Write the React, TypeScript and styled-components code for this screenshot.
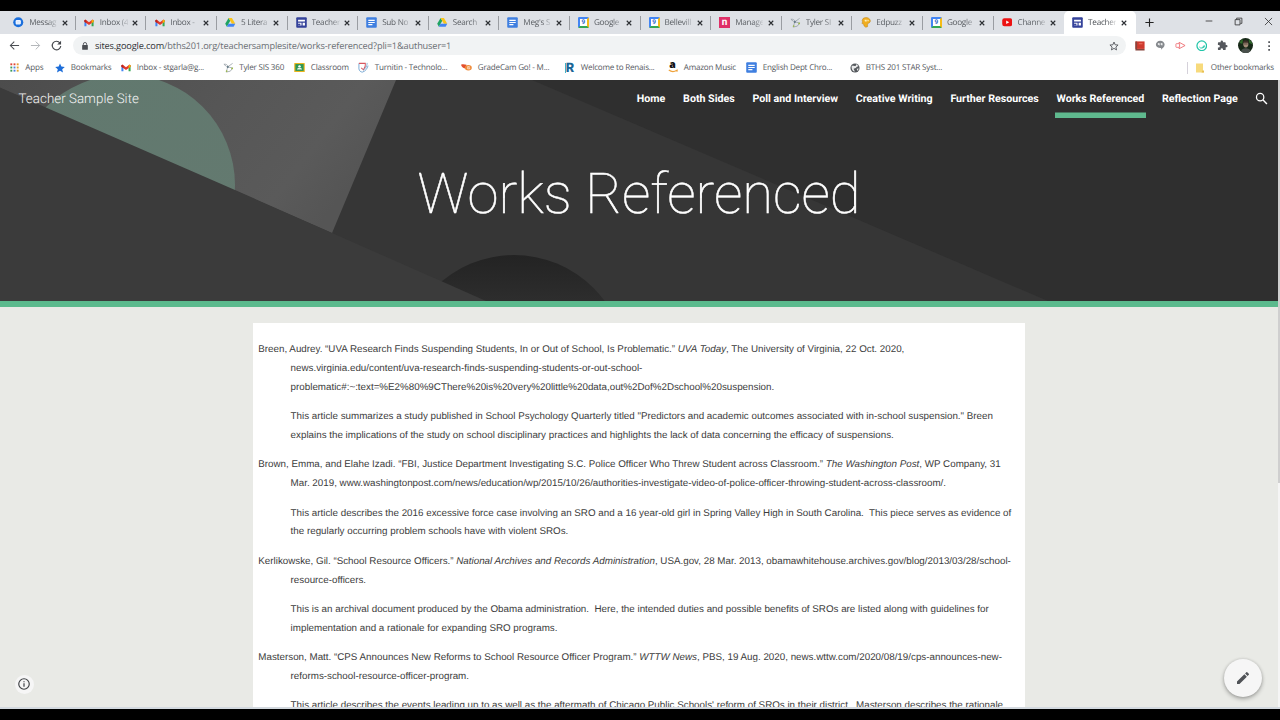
import React, { Fragment, type ReactNode } from "react";
import styled, { createGlobalStyle, css } from "styled-components";

const GlobalStyle = createGlobalStyle`
  * { box-sizing: border-box; }
  body { margin: 0; background: #000; overflow: hidden; }
  svg { display: block; }
`;

const chromeFont = `"Open Sans", "Noto Sans", sans-serif`;

const Screen = styled.div`
  width: 1280px;
  height: 720px;
  padding: 11px 0;
  background: #000;
  display: flex;
  flex-direction: column;
  overflow: hidden;
`;

const Browser = styled.div`
  height: 698px;
  display: flex;
  flex-direction: column;
  background: #fff;
  font-family: ${chromeFont};
  text-rendering: geometricPrecision;
`;

/* Tab strip */
const TabStrip = styled.div`
  flex: none;
  height: 23px;
  padding-left: 5.2px;
  background: #dee1e6;
  display: flex;
`;

const Tab = styled.div<{ $active?: boolean; $divider?: boolean }>`
  position: relative;
  flex: none;
  width: ${(p) => (p.$active ? 71.5 : 70.6)}px;
  height: 23px;
  padding: 0 4.5px 0 8px;
  display: flex;
  align-items: center;
  color: ${(p) => (p.$active ? "#4b4f54" : "#5a5e63")};
  ${(p) =>
    p.$active &&
    css`
      background: #fff;
      border-radius: 5px 5px 0 0;
    `}
  ${(p) =>
    p.$divider &&
    css`
      &::after {
        content: "";
        position: absolute;
        right: 0;
        top: 5px;
        width: 1px;
        height: 14px;
        background: #9a9da2;
      }
    `}
`;

const TabIcon = styled.span`
  width: 11px;
  flex: none;
  display: flex;
  justify-content: center;
`;

const TabTitle = styled.span`
  width: 28px;
  margin: 0 4.5px 0 5px;
  white-space: pre;
  font-size: 8.2px;
  line-height: 12px;
  letter-spacing: -0.28px;
  mask-image: linear-gradient(to right, #000 66%, rgba(0, 0, 0, 0.15) 100%);
`;

const NewTab = styled.div`
  width: 30px;
  padding-left: 9.5px;
  display: flex;
  align-items: center;
`;

const WindowButtons = styled.div`
  margin-left: auto;
  padding-right: 7px;
  display: flex;
  gap: 21px;
  height: 20px;
  align-items: center;
`;

/* Toolbar */
const Toolbar = styled.div`
  flex: none;
  height: 22px;
  padding: 1px 5px 0 9px;
  display: flex;
  align-items: center;
`;

const NavButtons = styled.div`
  width: 64px;
  display: flex;
  gap: 10px;
`;

const AddressBar = styled.div`
  width: 1053px;
  height: 19px;
  border-radius: 10px;
  background: #f1f3f4;
  display: flex;
  align-items: center;
  padding: 0 7px 0 8px;
  color: #6a6e73;
  font-size: 9.2px;
  line-height: 14px;
  letter-spacing: -0.14px;
`;

const Url = styled.span`
  margin-left: 6px;
  flex: 1;
  white-space: nowrap;
`;

const Host = styled.span`
  color: #2f3135;
`;

const Extensions = styled.div`
  flex: 1;
  padding-left: 9px;
  display: flex;
  align-items: center;
  justify-content: space-between;
`;

/* Bookmarks */
const BookmarkBar = styled.div`
  flex: none;
  height: 24px;
  padding: 0 6px 1px 8px;
  display: flex;
  align-items: center;
  color: #55595e;
  font-size: 8.1px;
  line-height: 12px;
  letter-spacing: -0.22px;
`;

const Bookmark = styled.div<{ $width?: number }>`
  flex: none;
  ${(p) => p.$width && `width: ${p.$width}px;`}
  display: flex;
  align-items: center;
  white-space: nowrap;
`;

const BookmarkIcon = styled.span`
  width: 12px;
  margin-right: 5.3px;
  display: flex;
  justify-content: center;
`;

const OtherBookmarks = styled.div`
  margin-left: auto;
  padding-left: 6px;
  border-left: 1px solid #d5d1da;
  display: flex;
`;

/* Page */
const Viewport = styled.div`
  flex: 1;
  min-height: 0;
  display: flex;
`;

const Page = styled.main`
  position: relative;
  width: 1278px;
  background: #e9eae6;
  overflow: hidden;
`;

const ScrollTrack = styled.div`
  width: 2px;
  background: #f5f5f5;
`;

const ScrollThumb = styled.div`
  height: 403px;
  background: #cfcfcf;
`;

const Banner = styled.header`
  position: relative;
  height: 227px;
  border-bottom: 6.5px solid #5bba8d;
  background: #383838;
  color: #fff;
  font-family: Roboto, sans-serif;
  overflow: hidden;
`;

const BannerArt = styled.svg`
  position: absolute;
  inset: 0;
`;

const SiteHeader = styled.div`
  position: relative;
  height: 37.5px;
  padding: 0 10px 0 18.5px;
  display: flex;
  align-items: center;
`;

const SiteName = styled.span`
  flex: 1;
  padding-top: 1.5px;
  font-size: 13.33px;
  font-weight: 300;
  letter-spacing: 0.04px;
  color: #f4f4f4;
`;

const SiteNav = styled.nav`
  display: flex;
  margin-right: 15.5px;
  gap: 14.35px;
`;

const NavLink = styled.a<{ $current?: boolean }>`
  height: 37.5px;
  padding: 0 1.7px 0.5px;
  display: flex;
  align-items: center;
  font-size: 10.67px;
  font-weight: 700;
  white-space: nowrap;
  box-shadow: ${(p) => (p.$current ? "inset 0 -5.5px #5fb98e" : "none")};
`;

const PageTitle = styled.h1`
  position: relative;
  margin: 42px 0 0;
  text-align: center;
  font-size: 56.2px;
  line-height: 68px;
  font-weight: 100;
  -webkit-text-stroke: 0.5px #fff;
`;

const Card = styled.article`
  width: 772px;
  margin: 16px 0 0 253px;
  padding: 18px 5px 0 5.3px;
  height: 500px;
  background: #fff;
  color: #3c3c3c;
  font-family: "Liberation Sans", Arial, sans-serif;
  font-size: 9.805px;
  line-height: 18.85px;
`;

const Citation = styled.p`
  margin: 0 0 10.55px;
  padding-left: 32.3px;
  text-indent: -32.3px;
  white-space: pre;
`;

const HangingLines = styled.span`
  display: block;
  text-indent: 0;
`;

const Annotation = styled.p`
  margin: 0 0 10.55px;
  padding-left: 32.3px;
  white-space: pre;
`;

const RoundButton = styled.button<{ $small?: boolean }>`
  position: absolute;
  padding: 0;
  border: 0;
  border-radius: 50%;
  background: #f6f6f6;
  display: flex;
  align-items: center;
  justify-content: center;
  ${(p) =>
    p.$small
      ? css`
          left: 14.5px;
          top: 594.5px;
          width: 19px;
          height: 19px;
        `
      : css`
          left: 1224px;
          top: 578.5px;
          width: 38px;
          height: 38px;
          box-shadow: 0 2px 4px rgba(0, 0, 0, 0.3), 0 0 3px rgba(0, 0, 0, 0.12);
        `}
`;

const BottomEdge = styled.div`
  flex: none;
  height: 2px;
  background: #d3d9df;
`;

/* Icons */
const Svg = ({ s = 10, box = 24, children }: { s?: number; box?: number; children: ReactNode }) => (
  <svg width={s} height={s} viewBox={`0 0 ${box} ${box}`} fill="none">
    {children}
  </svg>
);

const Gmail = () => (
  <Svg s={10}>
    <path d="M1 5v14.500h4.800V10z" fill="#4285f4" />
    <path d="M23 5v14.500h-4.800V10z" fill="#34a853" />
    <path d="M1 5.500 3.500 3.500 12 10l8.500-6.500L23 5.500V9l-11 8L1 9z" fill="#e0392d" />
    <path d="M18.200 6 21 4l2 1.500V9l-4.800 3.500z" fill="#f6b704" />
    <path d="M1 9l4.800 3.500V6L3 4 1 5.500z" fill="#b9251d" />
  </Svg>
);
const Messages = () => (
  <Svg s={10.5}>
    <circle cx="12" cy="12" r="11.500" fill="#1b6fdc" />
    <path d="M8.500 7h7A2.500 2.500 0 0 1 18 9.500v5a2.500 2.500 0 0 1-2.500 2.500H7l-1-2V9.500A2.500 2.500 0 0 1 8.500 7z" fill="#eef4ff" />
    <path d="M9 10.500h6M9 13.500h6" stroke="#bcd5f6" strokeWidth="1" />
  </Svg>
);
const Drive = () => (
  <Svg s={10.5}>
    <path d="M8.200 2 0.500 15.500 4.300 22 12 8.500z" fill="#1ea362" />
    <path d="M8.200 2h7.600l7.700 13.500h-7.700z" fill="#fbc417" />
    <path d="M4.300 22h15.400l3.800-6.500H8z" fill="#4285f4" />
  </Svg>
);
const SitesIcon = () => (
  <Svg s={11}>
    <rect x="0.500" y="0.500" width="23" height="23" rx="2" fill="#34429a" />
    <path d="M4.500 6h15v4h-15zM4.500 12.500h7.500v6H4.500zM14.500 12.500h5v6h-5z" fill="#fff" />
    <path d="M4.500 14.500h5v4h-5z" fill="#34429a" />
  </Svg>
);
const Docs = () => (
  <Svg s={11}>
    <rect x="0.500" y="0.500" width="23" height="23" rx="2" fill="#3f7fe0" />
    <path d="M5 6h14v2.500H5zM5 10.700h14v2.500H5zM5 15.500h9V18H5z" fill="#fff" />
  </Svg>
);
const CalendarDay = styled.span`
  width: 11px;
  height: 11px;
  flex: none;
  display: flex;
  align-items: center;
  justify-content: center;
  background: #fff;
  border: 2px solid;
  border-color: #4285f4 #f6bb16 #34a853 #4285f4;
  border-radius: 1.5px;
  color: #2f68c8;
  font: 700 6.5px/7px Roboto, sans-serif;
`;
const Calendar = () => <CalendarDay>9</CalendarDay>;
const LetterTile = styled.span`
  width: 11px;
  height: 11px;
  flex: none;
  display: flex;
  align-items: center;
  justify-content: center;
  background: #df3068;
  color: #fff;
  font: 700 10px/9px Roboto, sans-serif;
`;
const Nearpod = () => <LetterTile>n</LetterTile>;
const Tyler = () => (
  <Svg s={11}>
    <path d="M2 5c4-1 8 1 9 5M11 10l10-7M12 11l9 2M10 12l-3 10M7 22l9-2M16 20l5-7M2 5l6 5" stroke="#8a959c" strokeWidth="1.500" />
    <circle cx="10.500" cy="11" r="2.300" fill="#5c7380" />
    <circle cx="20" cy="14" r="2" fill="#9bb946" />
    <circle cx="8" cy="20" r="1.800" fill="#9bb946" />
  </Svg>
);
const Edpuzzle = () => (
  <Svg s={10.5}>
    <path d="M5 3c5-3 12-2 15 2 3 4 1 8-3 9l-2 2v6l-4 1.500-4-3-1-4-4-2 1.500-3-1-4z" fill="#f0ae20" stroke="#b67a12" strokeWidth="1" />
    <path d="M8 6h5v4H9zM14 6l4 1-2 4z" fill="#fff0be" />
  </Svg>
);
const Youtube = () => (
  <Svg s={10.5}>
    <rect x="0.500" y="3" width="23" height="18" rx="5" fill="#ec1212" />
    <path d="m9.500 8 7 4-7 4z" fill="#fff" />
  </Svg>
);
const CloseX = () => (
  <Svg s={6} box={12}>
    <path d="m1.500 1.500 9 9M10.500 1.500l-9 9" stroke="#2c2f33" strokeWidth="2.200" />
  </Svg>
);
const AppsGrid = () => (
  <Svg s={9}>
    {["#de4437", "#de4437", "#e99a2b", "#3b9b57", "#4a7fe0", "#e0a52f", "#3b9b57", "#4a7fe0", "#e0a52f"].map((c, i) => (
      <rect key={i} x={1 + (i % 3) * 8.5} y={1 + Math.floor(i / 3) * 8.5} width="5" height="5" fill={c} />
    ))}
  </Svg>
);
const BlueStar = () => (
  <Svg s={10}>
    <path d="m12 1 3.300 7.600 8.200.7-6.200 5.400 1.900 8L12 18.400l-7.200 4.300 1.900-8L.5 9.300l8.200-.7z" fill="#1c6dd9" />
  </Svg>
);
const Classroom = () => (
  <Svg s={11}>
    <rect x="0.500" y="2" width="23" height="20" rx="1" fill="#e9b51e" />
    <rect x="3" y="4.500" width="18" height="15" fill="#2d9657" />
    <circle cx="12" cy="9.500" r="2.600" fill="#fff" />
    <path d="M6.500 16.500c0-3 2.500-4 5.500-4s5.500 1 5.500 4z" fill="#e7f4ea" />
  </Svg>
);
const Turnitin = () => (
  <Svg s={11}>
    <path d="M2 3v12c1 5 4 7 8 7 6-2 10-7 12-14" stroke="#5a97cb" strokeWidth="1.700" />
    <path d="M2 3h14c1 5-1 10-4 14l-5-4" stroke="#d85860" strokeWidth="2.200" />
    <path d="M20 2c0 7-3 12-9 16" stroke="#5a97cb" strokeWidth="1.500" />
  </Svg>
);
const GradeCam = () => (
  <Svg s={11}>
    <path d="M0 6c5-2 9 0 12 0l-2 8C6 14 1 11 0 6z" fill="#e34f2d" />
    <ellipse cx="16" cy="12.500" rx="7.500" ry="6" fill="#ef8b39" />
    <path d="M19 10h-4.500v5H19v-2.500h-3" stroke="#fff" strokeWidth="1.300" />
  </Svg>
);
const RenaissanceMark = styled.span`
  color: #1b6697;
  font: 900 13px/13px Roboto, sans-serif;
  border-left: 1.5px solid #41b3c9;
  height: 10px;
  padding-top: 1px;
  display: flex;
  align-items: center;
`;
const AmazonMark = styled.span`
  display: flex;
  flex-direction: column;
  align-items: center;
  color: #111;
  font: 800 10.5px/7px "Open Sans", sans-serif;
`;
const Amazon = () => (
  <AmazonMark>
    a
    <svg width="10" height="4" viewBox="0 0 10 4" fill="none">
      <path d="M.8 1c2.500 2 5.500 2 8 .3M9.300.5 9 2.700" stroke="#efa23a" strokeWidth="1.100" />
    </svg>
  </AmazonMark>
);
const Globe = () => (
  <Svg s={10}>
    <circle cx="12" cy="12" r="11" fill="#55595d" />
    <path d="M4 7c4-1 6 1 9 0s0-4 3-4l4 4c-2 2-4 1-5 4s-5 1-6 3 3 3 2 7c-5-2-8-7-7-14zM16 14l5-1-3 6z" fill="#e8e9ea" />
  </Svg>
);
const Folder = () => (
  <svg width="8" height="10" viewBox="0 0 8 10">
    <path d="M0 .5h7v7.500l1 1.500H0z" fill="#f7da7c" />
    <path d="M6.500 7.500h1.500v2H5.500z" fill="#e8be52" />
  </svg>
);

const tabs: { title: string; icon: ReactNode }[] = [
  { title: "Messag", icon: <Messages /> },
  { title: "Inbox (4", icon: <Gmail /> },
  { title: "Inbox -", icon: <Gmail /> },
  { title: "5 Litera", icon: <Drive /> },
  { title: "Teacher", icon: <SitesIcon /> },
  { title: "Sub No", icon: <Docs /> },
  { title: "Search", icon: <Drive /> },
  { title: "Meg's S", icon: <Docs /> },
  { title: "Google", icon: <Calendar /> },
  { title: "Bellevill", icon: <Calendar /> },
  { title: "Manage", icon: <Nearpod /> },
  { title: "Tyler SI", icon: <Tyler /> },
  { title: "Edpuzz", icon: <Edpuzzle /> },
  { title: "Google", icon: <Calendar /> },
  { title: "Channe", icon: <Youtube /> },
  { title: "Teacher", icon: <SitesIcon /> },
];

const bookmarks: { label: string; width: number; icon: ReactNode }[] = [
  { label: "Apps", width: 45.5, icon: <AppsGrid /> },
  { label: "Bookmarks", width: 66, icon: <BlueStar /> },
  { label: "Inbox - stgarla@g...", width: 102.5, icon: <Gmail /> },
  { label: "Tyler SIS 360", width: 71.5, icon: <Tyler /> },
  { label: "Classroom", width: 64, icon: <Classroom /> },
  { label: "Turnitin - Technolo...", width: 103, icon: <Turnitin /> },
  { label: "GradeCam Go! - M...", width: 103, icon: <GradeCam /> },
  { label: "Welcome to Renais...", width: 103, icon: <RenaissanceMark>R</RenaissanceMark> },
  { label: "Amazon Music", width: 79, icon: <Amazon /> },
  { label: "English Dept Chro...", width: 103, icon: <Docs /> },
  { label: "BTHS 201 STAR Syst...", width: 103, icon: <Globe /> },
];

const pages = ["Home", "Both Sides", "Poll and Interview", "Creative Writing", "Further Resources", "Works Referenced", "Reflection Page"];

const references: { lead: ReactNode; rest: string; note: string }[] = [
  {
    lead: (
      <>
        Breen, Audrey. “UVA Research Finds Suspending Students, In or Out of School, Is Problematic.” <i>UVA Today</i>, The University of Virginia, 22 Oct. 2020,
      </>
    ),
    rest: "news.virginia.edu/content/uva-research-finds-suspending-students-or-out-school-\nproblematic#:~:text=%E2%80%9CThere%20is%20very%20little%20data,out%2Dof%2Dschool%20suspension.",
    note: 'This article summarizes a study published in School Psychology Quarterly titled "Predictors and academic outcomes associated with in-school suspension." Breen\nexplains the implications of the study on school disciplinary practices and highlights the lack of data concerning the efficacy of suspensions.',
  },
  {
    lead: (
      <>
        Brown, Emma, and Elahe Izadi. “FBI, Justice Department Investigating S.C. Police Officer Who Threw Student across Classroom.” <i>The Washington Post</i>, WP Company, 31
      </>
    ),
    rest: "Mar. 2019, www.washingtonpost.com/news/education/wp/2015/10/26/authorities-investigate-video-of-police-officer-throwing-student-across-classroom/.",
    note: "This article describes the 2016 excessive force case involving an SRO and a 16 year-old girl in Spring Valley High in South Carolina.  This piece serves as evidence of\nthe regularly occurring problem schools have with violent SROs.",
  },
  {
    lead: (
      <>
        Kerlikowske, Gil. “School Resource Officers.” <i>National Archives and Records Administration</i>, USA.gov, 28 Mar. 2013, obamawhitehouse.archives.gov/blog/2013/03/28/school-
      </>
    ),
    rest: "resource-officers.",
    note: "This is an archival document produced by the Obama administration.  Here, the intended duties and possible benefits of SROs are listed along with guidelines for\nimplementation and a rationale for expanding SRO programs.",
  },
  {
    lead: (
      <>
        Masterson, Matt. “CPS Announces New Reforms to School Resource Officer Program.” <i>WTTW News</i>, PBS, 19 Aug. 2020, news.wttw.com/2020/08/19/cps-announces-new-
      </>
    ),
    rest: "reforms-school-resource-officer-program.",
    note: "This article describes the events leading up to as well as the aftermath of Chicago Public Schools' reform of SROs in their district.  Masterson describes the rationale",
  },
];

export default function App() {
  return (
    <Screen>
      <GlobalStyle />
      <Browser>
        <TabStrip>
          {tabs.map((t, i) => (
            <Tab key={i} $active={i === tabs.length - 1} $divider={i < tabs.length - 2}>
              <TabIcon>{t.icon}</TabIcon>
              <TabTitle>{t.title}</TabTitle>
              <CloseX />
            </Tab>
          ))}
          <NewTab>
            <Svg s={9}>
              <path d="M12 1v22M1 12h22" stroke="#222" strokeWidth="3" />
            </Svg>
          </NewTab>
          <WindowButtons>
            <Svg s={8}>
              <path d="M2 12h20" stroke="#333" strokeWidth="2.500" />
            </Svg>
            <Svg s={9}>
              <path d="M3 7h13v14H3zM7 7V3h14v14h-4" stroke="#333" strokeWidth="2.200" />
            </Svg>
            <Svg s={9}>
              <path d="m2.500 2.500 19 19M21.500 2.500l-19 19" stroke="#333" strokeWidth="2.200" />
            </Svg>
          </WindowButtons>
        </TabStrip>

        <Toolbar>
          <NavButtons>
            <Svg s={11}>
              <path d="M22 12H3M11.500 3.500 3 12l8.500 8.500" stroke="#4a4d52" strokeWidth="2.300" />
            </Svg>
            <Svg s={11}>
              <path d="M2 12h19M12.500 3.500 21 12l-8.500 8.500" stroke="#aeb1b5" strokeWidth="2" />
            </Svg>
            <Svg s={11}>
              <path d="M19.500 6.500A9.300 9.300 0 1 0 21.300 13" stroke="#44474c" strokeWidth="2.500" />
              <path d="M22 1.500V10h-8.500z" fill="#44474c" />
            </Svg>
          </NavButtons>
          <AddressBar>
            <Svg s={8}>
              <path d="M7 10V6.500a5 5 0 0 1 10 0V10" stroke="#4a4d52" strokeWidth="2.600" />
              <rect x="3.500" y="9" width="17" height="14" rx="1.500" fill="#4a4d52" />
            </Svg>
            <Url>
              <Host>sites.google.com</Host>/bths201.org/teachersamplesite/works-referenced?pli=1&amp;authuser=1
            </Url>
            <Svg s={10}>
              <path d="m12 2.500 2.800 6.600 7 .6-5.300 4.700 1.600 7L12 17.700l-6.100 3.700 1.600-7-5.300-4.700 7-.6z" stroke="#55585d" strokeWidth="2.200" />
            </Svg>
          </AddressBar>
          <Extensions>
            <Svg s={10}>
              <path d="M1 1h22v18H1z" fill="#cf3a2e" />
              <path d="M1 1h4v22H1zM5 19h18v4H5z" fill="#87453d" />
              <path d="M9 5h9v3H9z" fill="#e56a59" />
            </Svg>
            <Svg s={10.5}>
              <path d="M12 1.500c6 0 10 4 10 9 0 6-5 8-8 12v-4C7 19 2 16 2 10.500c0-5 4-9 10-9z" fill="#85898d" />
              <path d="M6.500 7.500h4v4l-1.500 2v-2.500H6.500zM13 7.500h4v4l-1.500 2v-2.500H13z" fill="#fff" />
            </Svg>
            <Svg s={11}>
              <path d="m9 5 13 7-13 7z" stroke="#ee6f73" strokeWidth="2" />
              <rect x="2" y="8" width="8" height="8" rx="1" fill="#fff" stroke="#ee6f73" strokeWidth="1.800" />
            </Svg>
            <Svg s={11.5}>
              <circle cx="12" cy="12" r="10" stroke="#21c5a8" strokeWidth="2.600" />
              <path d="M17 12a5.500 5.500 0 0 1-10 2.500M13 15h4v-4" stroke="#21c5a8" strokeWidth="2" />
            </Svg>
            <Svg s={11}>
              <path d="M20.500 11H19V7c0-1.100-.9-2-2-2h-4V3.500a2.500 2.500 0 0 0-5 0V5H4c-1.100 0-2 .9-2 2v3.800h1.500a2.700 2.700 0 0 1 0 5.400H2V20c0 1.100.9 2 2 2h3.800v-1.500a2.700 2.700 0 0 1 5.400 0V22H17c1.100 0 2-.9 2-2v-4h1.500a2.500 2.500 0 0 0 0-5z" fill="#55585d" />
            </Svg>
            <Svg s={15}>
              <circle cx="12" cy="12" r="12" fill="#172818" />
              <path d="M2 8c2-3 3-5 6-6l-1 7zM17 2c3 2 5 4 6 8l-5-2z" fill="#316b2b" />
              <ellipse cx="12.500" cy="10" rx="4" ry="5" fill="#a48d79" />
              <path d="M8 7.500c0-5 9-5 9 0z" fill="#3b2e26" />
              <path d="M5 21c1-6 14-6 15 0-4 4-11 4-15 0z" fill="#49504c" />
              <path d="M9.500 9.500h6" stroke="#322" strokeWidth="1" />
            </Svg>
            <Svg s={12}>
              <path d="M10.500 2.500h3.500v3.500h-3.500zM10.500 10.300h3.500v3.500h-3.500zM10.500 18h3.500v3.500h-3.500z" fill="#55585d" />
            </Svg>
          </Extensions>
        </Toolbar>

        <BookmarkBar>
          {bookmarks.map((b) => (
            <Bookmark key={b.label} $width={b.width}>
              <BookmarkIcon>{b.icon}</BookmarkIcon>
              {b.label}
            </Bookmark>
          ))}
          <OtherBookmarks>
            <Bookmark>
              <BookmarkIcon>
                <Folder />
              </BookmarkIcon>
              Other bookmarks
            </Bookmark>
          </OtherBookmarks>
        </BookmarkBar>

        <Viewport>
          <Page>
            <Banner>
              <BannerArt width="1278" height="221" viewBox="0 80 1278 221">
                <defs>
                  <linearGradient id="plane" x1="0" y1="0" x2="1" y2="0.300">
                    <stop offset="0" stopColor="#4c4c4c" />
                    <stop offset="0.550" stopColor="#565656" />
                    <stop offset="0.850" stopColor="#5a5a5a" />
                    <stop offset="1" stopColor="#555" />
                  </linearGradient>
                  <linearGradient id="disc" x1="0" y1="0" x2="0" y2="1">
                    <stop offset="0" stopColor="#232323" />
                    <stop offset="0.200" stopColor="#2d2d2d" />
                    <stop offset="1" stopColor="#303030" />
                  </linearGradient>
                  <linearGradient id="mint" x1="0" y1="0" x2="1" y2="1">
                    <stop offset="0" stopColor="#61786e" />
                    <stop offset="1" stopColor="#647a70" />
                  </linearGradient>
                </defs>
                <rect y="80" width="1278" height="221" fill="#363636" />
                <path d="M532 80H1278V301H1048z" fill="#2f2f2f" />
                <path d="M0 80H396L332 233 0 88z" fill="url(#plane)" />
                <circle cx="124.500" cy="185" r="110.500" fill="url(#mint)" />
                <circle cx="514" cy="367.500" r="112.500" fill="url(#disc)" />
                <path d="M0 87.500 235 190 332 233 441 281 486 301H0z" fill="#3b3b3b" />
              </BannerArt>
              <SiteHeader>
                <SiteName>Teacher Sample Site</SiteName>
                <SiteNav>
                  {pages.map((p) => (
                    <NavLink key={p} $current={p === "Works Referenced"}>
                      {p}
                    </NavLink>
                  ))}
                </SiteNav>
                <Svg s={13}>
                  <circle cx="9.500" cy="9.500" r="6.800" stroke="#fff" strokeWidth="2.300" />
                  <path d="m14.500 14.500 7.500 7.500" stroke="#fff" strokeWidth="2.600" />
                </Svg>
              </SiteHeader>
              <PageTitle>Works Referenced</PageTitle>
            </Banner>
            <Card>
              {references.map((r, i) => (
                <Fragment key={i}>
                  <Citation>
                    {r.lead}
                    <HangingLines>{r.rest}</HangingLines>
                  </Citation>
                  <Annotation>{r.note}</Annotation>
                </Fragment>
              ))}
            </Card>
            <RoundButton $small aria-label="Site information">
              <Svg s={12}>
                <circle cx="12" cy="12" r="10.500" stroke="#3d4043" strokeWidth="2.300" />
                <path d="M12 10.500v7M12 6.300v2.400" stroke="#3d4043" strokeWidth="2.400" />
              </Svg>
            </RoundButton>
            <RoundButton aria-label="Edit">
              <Svg s={16}>
                <path d="M3 17.250V21h3.750L17.810 9.940l-3.750-3.750zM20.710 7.040a1 1 0 0 0 0-1.410l-2.340-2.340a1 1 0 0 0-1.410 0l-1.830 1.830 3.750 3.750z" fill="#505357" />
              </Svg>
            </RoundButton>
          </Page>
          <ScrollTrack>
            <ScrollThumb />
          </ScrollTrack>
        </Viewport>
        <BottomEdge />
      </Browser>
    </Screen>
  );
}
